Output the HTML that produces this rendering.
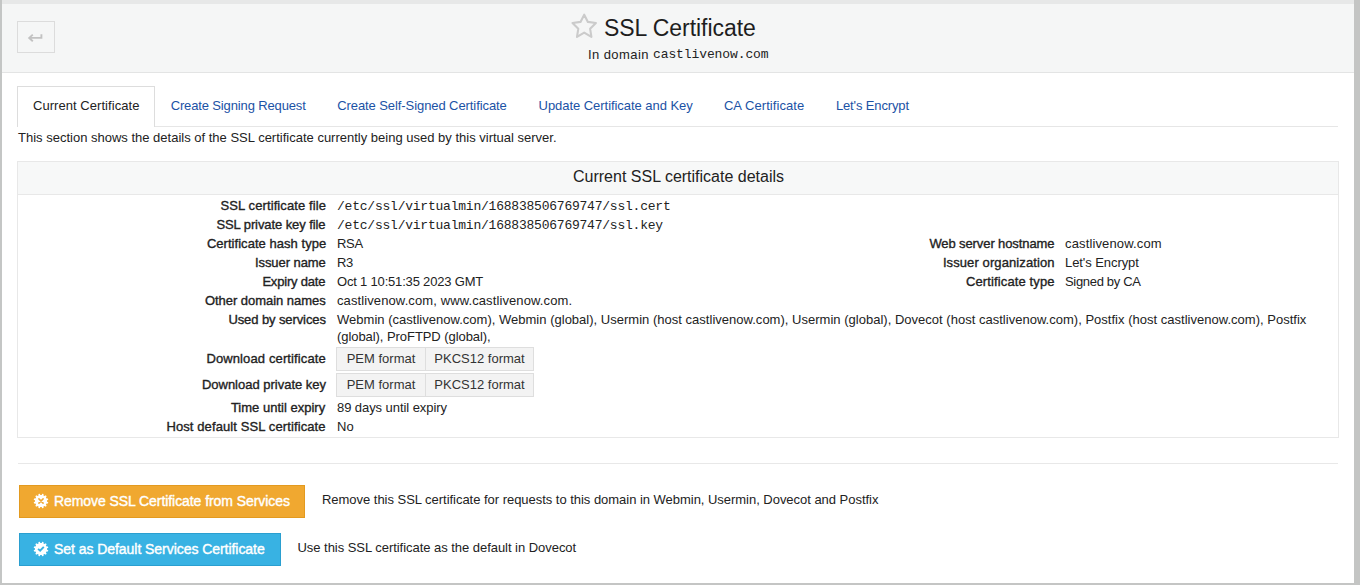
<!DOCTYPE html>
<html><head><meta charset="utf-8"><style>
html,body{margin:0;padding:0;}
body{width:1360px;height:585px;position:relative;overflow:hidden;background:#fff;font-family:'Liberation Sans', sans-serif;}
.t{position:absolute;white-space:nowrap;}
.m{font-family:'Liberation Mono', monospace;letter-spacing:-0.21px;}
.dl{position:absolute;left:336px;height:22px;border:1px solid #dedede;background:#f3f3f3;display:flex;font-size:13px;line-height:22px;color:#333;text-align:center;}
.btn{position:absolute;color:#fff;font-size:14px;-webkit-text-stroke:0.4px #fff;}
</style></head><body>
<div style="position:absolute;left:2px;top:4px;width:1352px;height:68px;background:#f5f6f6;border-bottom:1px solid #e3e4e4"></div><div style="position:absolute;left:0;top:0;width:1360px;height:4px;background:#e7e8e8"></div><div style="position:absolute;left:0;top:0;width:2px;height:585px;background:#c4c6c5"></div><div style="position:absolute;left:1354px;top:0;width:6px;height:585px;background:#c4c5c4"></div><div style="position:absolute;left:0;top:583px;width:1360px;height:2px;background:#c4c5c4"></div><div style="position:absolute;left:17px;top:21px;width:36px;height:30px;border:1px solid #dcdcdc;"></div><svg style="position:absolute;left:27px;top:31px" width="18" height="14" viewBox="0 0 18 14"><path d="M14.4 3.2 V6.9 H3 M5.8 3.6 L2.2 6.9 L5.8 10.3" fill="none" stroke="#c2c2c2" stroke-width="1.9" stroke-linecap="butt"/></svg><svg style="position:absolute;left:570px;top:12px" width="28" height="28" viewBox="0 0 28 28"><path d="M14.2 2.7 L17.9 9.9 L25.9 11 L20.1 16.7 L21.4 24.9 L14.2 20.6 L7 24.9 L8.3 16.7 L2.5 11 L10.5 9.9 Z" fill="none" stroke="#cbcbcb" stroke-width="2.1" stroke-linejoin="round"/></svg><div class="t" style="left:604px;top:12.73px;font-size:23px;line-height:30px;font-weight:normal;color:#1e1e1e;font-family:'Liberation Sans', sans-serif;letter-spacing:-0.05px;">SSL Certificate</div>
<div class="t" style="left:588px;top:45.50px;font-size:13px;line-height:18px;font-weight:normal;color:#222;font-family:'Liberation Sans', sans-serif;letter-spacing:0.42px;">In domain</div>
<div class="t" style="left:653px;top:45.50px;font-size:13px;line-height:18px;font-weight:normal;color:#222;font-family:'Liberation Mono', monospace;letter-spacing:-0.1px;">castlivenow.com</div>
<div style="position:absolute;left:17px;top:126px;width:1321px;height:1px;background:#e6e6e6"></div><div style="position:absolute;left:17px;top:86px;width:136px;height:40px;border:1px solid #dddddd;border-bottom:0;background:#fff"></div><div class="t" style="left:33.0px;top:97.30px;font-size:13px;line-height:18px;font-weight:normal;color:#222;font-family:'Liberation Sans', sans-serif;letter-spacing:0.05px;">Current Certificate</div>
<div class="t" style="left:170.7px;top:97.30px;font-size:13px;line-height:18px;font-weight:normal;color:#1b52a5;font-family:'Liberation Sans', sans-serif;letter-spacing:-0.14px;">Create Signing Request</div>
<div class="t" style="left:337.2px;top:97.30px;font-size:13px;line-height:18px;font-weight:normal;color:#1b52a5;font-family:'Liberation Sans', sans-serif;letter-spacing:-0.08px;">Create Self-Signed Certificate</div>
<div class="t" style="left:538.6px;top:97.30px;font-size:13px;line-height:18px;font-weight:normal;color:#1b52a5;font-family:'Liberation Sans', sans-serif;letter-spacing:-0.05px;">Update Certificate and Key</div>
<div class="t" style="left:723.9px;top:97.30px;font-size:13px;line-height:18px;font-weight:normal;color:#1b52a5;font-family:'Liberation Sans', sans-serif;letter-spacing:0.06px;">CA Certificate</div>
<div class="t" style="left:835.9px;top:97.30px;font-size:13px;line-height:18px;font-weight:normal;color:#1b52a5;font-family:'Liberation Sans', sans-serif;letter-spacing:-0.13px;">Let's Encrypt</div>
<div class="t" style="left:18px;top:128.70px;font-size:13px;line-height:18px;font-weight:normal;color:#222;font-family:'Liberation Sans', sans-serif;">This section shows the details of the SSL certificate currently being used by this virtual server.</div>
<div style="position:absolute;left:17px;top:161px;width:1320px;height:275px;border:1px solid #e8e8e8;"></div><div style="position:absolute;left:18px;top:162px;width:1320px;height:32px;background:#f7f8f8;border-bottom:1px solid #e8e8e8"></div><div class="t" style="left:573px;top:166.46px;font-size:16px;line-height:22px;font-weight:normal;color:#222;font-family:'Liberation Sans', sans-serif;">Current SSL certificate details</div>
<div class="t" style="left:220.4px;top:196.00px;font-size:13px;line-height:19px;font-weight:normal;color:#222;font-family:'Liberation Sans', sans-serif;letter-spacing:0.109px;-webkit-text-stroke:0.35px #222;">SSL certificate file</div>
<div class="t" style="left:337px;top:196.00px;font-size:13px;line-height:19px;font-weight:normal;color:#222;font-family:'Liberation Sans', sans-serif;letter-spacing:0px;"><span class="m" style="letter-spacing:-0.222px">/etc/ssl/virtualmin/168838506769747/ssl.cert</span></div>
<div class="t" style="left:216.4px;top:215.00px;font-size:13px;line-height:19px;font-weight:normal;color:#222;font-family:'Liberation Sans', sans-serif;letter-spacing:-0.089px;-webkit-text-stroke:0.35px #222;">SSL private key file</div>
<div class="t" style="left:337px;top:215.00px;font-size:13px;line-height:19px;font-weight:normal;color:#222;font-family:'Liberation Sans', sans-serif;letter-spacing:0px;"><span class="m" style="letter-spacing:-0.222px">/etc/ssl/virtualmin/168838506769747/ssl.key</span></div>
<div class="t" style="left:206.9px;top:234.00px;font-size:13px;line-height:19px;font-weight:normal;color:#222;font-family:'Liberation Sans', sans-serif;letter-spacing:0.04px;-webkit-text-stroke:0.35px #222;">Certificate hash type</div>
<div class="t" style="left:337px;top:234.00px;font-size:13px;line-height:19px;font-weight:normal;color:#222;font-family:'Liberation Sans', sans-serif;letter-spacing:-0.3px;">RSA</div>
<div class="t" style="left:254.89999999999998px;top:253.00px;font-size:13px;line-height:19px;font-weight:normal;color:#222;font-family:'Liberation Sans', sans-serif;letter-spacing:-0.06px;-webkit-text-stroke:0.35px #222;">Issuer name</div>
<div class="t" style="left:337px;top:253.00px;font-size:13px;line-height:19px;font-weight:normal;color:#222;font-family:'Liberation Sans', sans-serif;letter-spacing:-0.4px;">R3</div>
<div class="t" style="left:262.40000000000003px;top:272.00px;font-size:13px;line-height:19px;font-weight:normal;color:#222;font-family:'Liberation Sans', sans-serif;letter-spacing:-0.2px;-webkit-text-stroke:0.35px #222;">Expiry date</div>
<div class="t" style="left:337px;top:272.00px;font-size:13px;line-height:19px;font-weight:normal;color:#222;font-family:'Liberation Sans', sans-serif;letter-spacing:-0.186px;">Oct 1 10:51:35 2023 GMT</div>
<div class="t" style="left:204.9px;top:291.00px;font-size:13px;line-height:19px;font-weight:normal;color:#222;font-family:'Liberation Sans', sans-serif;letter-spacing:-0.034px;-webkit-text-stroke:0.35px #222;">Other domain names</div>
<div class="t" style="left:337px;top:291.00px;font-size:13px;line-height:19px;font-weight:normal;color:#222;font-family:'Liberation Sans', sans-serif;letter-spacing:0.106px;">castlivenow.com, www.castlivenow.com.</div>
<div class="t" style="left:228.4px;top:310.00px;font-size:13px;line-height:19px;font-weight:normal;color:#222;font-family:'Liberation Sans', sans-serif;letter-spacing:-0.094px;-webkit-text-stroke:0.35px #222;">Used by services</div>
<div class="t" style="left:337px;top:310.00px;font-size:13px;line-height:19px;font-weight:normal;color:#222;font-family:'Liberation Sans', sans-serif;letter-spacing:0.015px;">Webmin (castlivenow.com), Webmin (global), Usermin (host castlivenow.com), Usermin (global), Dovecot (host castlivenow.com), Postfix (host castlivenow.com), Postfix</div>
<div class="t" style="left:206.4px;top:349.00px;font-size:13px;line-height:19px;font-weight:normal;color:#222;font-family:'Liberation Sans', sans-serif;letter-spacing:0.121px;-webkit-text-stroke:0.35px #222;">Download certificate</div>
<div class="t" style="left:201.9px;top:374.50px;font-size:13px;line-height:19px;font-weight:normal;color:#222;font-family:'Liberation Sans', sans-serif;letter-spacing:-0.007px;-webkit-text-stroke:0.35px #222;">Download private key</div>
<div class="t" style="left:230.9px;top:398.00px;font-size:13px;line-height:19px;font-weight:normal;color:#222;font-family:'Liberation Sans', sans-serif;letter-spacing:0.007px;-webkit-text-stroke:0.35px #222;">Time until expiry</div>
<div class="t" style="left:337px;top:398.00px;font-size:13px;line-height:19px;font-weight:normal;color:#222;font-family:'Liberation Sans', sans-serif;letter-spacing:-0.068px;">89 days until expiry</div>
<div class="t" style="left:166.4px;top:416.60px;font-size:13px;line-height:19px;font-weight:normal;color:#222;font-family:'Liberation Sans', sans-serif;letter-spacing:0.105px;-webkit-text-stroke:0.35px #222;">Host default SSL certificate</div>
<div class="t" style="left:337px;top:416.60px;font-size:13px;line-height:19px;font-weight:normal;color:#222;font-family:'Liberation Sans', sans-serif;letter-spacing:0px;">No</div>
<div class="t" style="left:337px;top:326.60px;font-size:13px;line-height:19px;font-weight:normal;color:#222;font-family:'Liberation Sans', sans-serif;letter-spacing:-0.062px;">(global), ProFTPD (global),</div>
<div class="t" style="left:929.4000000000001px;top:234.00px;font-size:13px;line-height:19px;font-weight:normal;color:#222;font-family:'Liberation Sans', sans-serif;letter-spacing:-0.101px;-webkit-text-stroke:0.35px #222;">Web server hostname</div>
<div class="t" style="left:1065px;top:234.00px;font-size:13px;line-height:19px;font-weight:normal;color:#222;font-family:'Liberation Sans', sans-serif;letter-spacing:0.143px;">castlivenow.com</div>
<div class="t" style="left:942.9px;top:253.00px;font-size:13px;line-height:19px;font-weight:normal;color:#222;font-family:'Liberation Sans', sans-serif;letter-spacing:0.098px;-webkit-text-stroke:0.35px #222;">Issuer organization</div>
<div class="t" style="left:1065px;top:253.00px;font-size:13px;line-height:19px;font-weight:normal;color:#222;font-family:'Liberation Sans', sans-serif;letter-spacing:-0.075px;">Let's Encrypt</div>
<div class="t" style="left:965.9px;top:272.00px;font-size:13px;line-height:19px;font-weight:normal;color:#222;font-family:'Liberation Sans', sans-serif;letter-spacing:0.133px;-webkit-text-stroke:0.35px #222;">Certificate type</div>
<div class="t" style="left:1065px;top:272.00px;font-size:13px;line-height:19px;font-weight:normal;color:#222;font-family:'Liberation Sans', sans-serif;letter-spacing:-0.318px;">Signed by CA</div>
<div class="dl" style="top:347px"><div style="width:88px">PEM format</div><div style="width:107px;border-left:1px solid #dedede">PKCS12 format</div></div><div class="dl" style="top:373px"><div style="width:88px">PEM format</div><div style="width:107px;border-left:1px solid #dedede">PKCS12 format</div></div><div style="position:absolute;left:18px;top:463px;width:1320px;height:1px;background:#e8e8e8"></div><div class="btn" style="left:19px;top:485px;width:284px;height:31px;background:#f0a830;border:1px solid #e39a1f;"><span style="position:absolute;left:34px;top:0;line-height:31px;letter-spacing:-0.07px">Remove SSL Certificate from Services</span></div><svg style="position:absolute;left:32px;top:491.8px" width="18" height="18" viewBox="0 0 18 18"><polygon points="15.10,9.00 15.06,8.31 16.30,7.78 15.93,6.41 14.59,6.57 14.28,5.95 13.90,5.37 14.71,4.29 13.71,3.29 12.63,4.10 12.05,3.72 11.43,3.41 11.59,2.07 10.22,1.70 9.69,2.94 9.00,2.90 8.31,2.94 7.78,1.70 6.41,2.07 6.57,3.41 5.95,3.72 5.37,4.10 4.29,3.29 3.29,4.29 4.10,5.37 3.72,5.95 3.41,6.57 2.07,6.41 1.70,7.78 2.94,8.31 2.90,9.00 2.94,9.69 1.70,10.22 2.07,11.59 3.41,11.43 3.72,12.05 4.10,12.63 3.29,13.71 4.29,14.71 5.37,13.90 5.95,14.28 6.57,14.59 6.41,15.93 7.78,16.30 8.31,15.06 9.00,15.10 9.69,15.06 10.22,16.30 11.59,15.93 11.43,14.59 12.05,14.28 12.63,13.90 13.71,14.71 14.71,13.71 13.90,12.63 14.28,12.05 14.59,11.43 15.93,11.59 16.30,10.22 15.06,9.69" fill="#fff"/><path d="M6.9 6.9 L11.1 11.1 M11.1 6.9 L6.9 11.1" stroke="#f0a830" stroke-width="1.5" stroke-linecap="round"/></svg><div class="btn" style="left:19px;top:533px;width:260px;height:31px;background:#38b2e3;border:1px solid #2a9fd0;"><span style="position:absolute;left:34px;top:0;line-height:31px;letter-spacing:-0.05px">Set as Default Services Certificate</span></div><svg style="position:absolute;left:32px;top:539.8px" width="18" height="18" viewBox="0 0 18 18"><polygon points="15.10,9.00 15.06,8.31 16.30,7.78 15.93,6.41 14.59,6.57 14.28,5.95 13.90,5.37 14.71,4.29 13.71,3.29 12.63,4.10 12.05,3.72 11.43,3.41 11.59,2.07 10.22,1.70 9.69,2.94 9.00,2.90 8.31,2.94 7.78,1.70 6.41,2.07 6.57,3.41 5.95,3.72 5.37,4.10 4.29,3.29 3.29,4.29 4.10,5.37 3.72,5.95 3.41,6.57 2.07,6.41 1.70,7.78 2.94,8.31 2.90,9.00 2.94,9.69 1.70,10.22 2.07,11.59 3.41,11.43 3.72,12.05 4.10,12.63 3.29,13.71 4.29,14.71 5.37,13.90 5.95,14.28 6.57,14.59 6.41,15.93 7.78,16.30 8.31,15.06 9.00,15.10 9.69,15.06 10.22,16.30 11.59,15.93 11.43,14.59 12.05,14.28 12.63,13.90 13.71,14.71 14.71,13.71 13.90,12.63 14.28,12.05 14.59,11.43 15.93,11.59 16.30,10.22 15.06,9.69" fill="#fff"/><path d="M6.1 8.9 L8.1 10.7 L11.8 6.9" fill="none" stroke="#38b2e3" stroke-width="1.9"/></svg><div class="t" style="left:322px;top:490.70px;font-size:13px;line-height:18px;font-weight:normal;color:#222;font-family:'Liberation Sans', sans-serif;letter-spacing:-0.03px;">Remove this SSL certificate for requests to this domain in Webmin, Usermin, Dovecot and Postfix</div>
<div class="t" style="left:297.5px;top:538.50px;font-size:13px;line-height:18px;font-weight:normal;color:#222;font-family:'Liberation Sans', sans-serif;letter-spacing:-0.04px;">Use this SSL certificate as the default in Dovecot</div>

</body></html>
